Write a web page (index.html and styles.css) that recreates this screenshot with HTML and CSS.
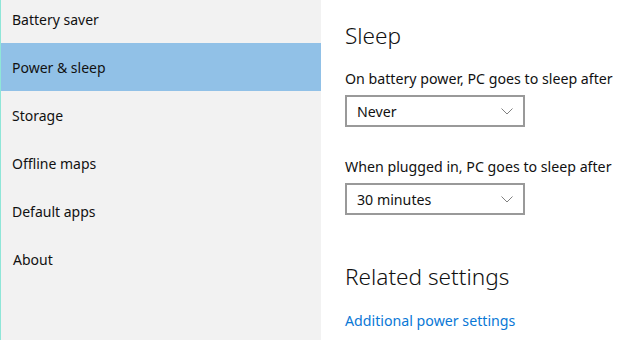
FILE: index.html
```html
<!DOCTYPE html>
<html>
<head>
<meta charset="utf-8">
<link rel="stylesheet" href="styles.css">
</head>
<body>
<div class="app">
  <nav class="sidebar">
    <ul class="nav-list">
      <li class="nav-item">Battery saver</li>
      <li class="nav-item selected">Power &amp; sleep</li>
      <li class="nav-item">Storage</li>
      <li class="nav-item">Offline maps</li>
      <li class="nav-item">Default apps</li>
      <li class="nav-item about">About</li>
    </ul>
  </nav>
  <main class="content">
    <h2 class="section-title">Sleep</h2>
    <div class="field">
      <div class="field-label">On battery power, PC goes to sleep after</div>
      <div class="select">
        <span class="select-value">Never</span>
        <svg class="chevron" width="12" height="7" viewBox="0 0 12 7"><polyline points="0.5,0.5 6,6 11.5,0.5" fill="none" stroke="#808080" stroke-width="1"/></svg>
      </div>
    </div>
    <div class="field">
      <div class="field-label">When plugged in, PC goes to sleep after</div>
      <div class="select">
        <span class="select-value">30 minutes</span>
        <svg class="chevron" width="12" height="7" viewBox="0 0 12 7"><polyline points="0.5,0.5 6,6 11.5,0.5" fill="none" stroke="#808080" stroke-width="1"/></svg>
      </div>
    </div>
    <h2 class="section-title related">Related settings</h2>
    <a class="link">Additional power settings</a>
  </main>
</div>
</body>
</html>
```
FILE: styles.css
```css
html, body {
  margin: 0;
  padding: 0;
  background: #ffffff;
  font-family: "Noto Sans", "Open Sans", sans-serif;
  color: #000;
}
.app {
  display: flex;
  width: 640px;
  height: 340px;
  overflow: hidden;
}
.sidebar {
  width: 320px;
  flex: none;
  background: #f2f2f2;
  border-left: 1px solid #8fe6d8;
}
.nav-list {
  list-style: none;
  margin: -5px 0 0 0;
  padding: 0;
}
.nav-item {
  height: 48px;
  display: flex;
  align-items: center;
  padding-left: 11px;
  font-size: 14px;
  color: #111;
}
.nav-item.about {
  padding-left: 12px;
}
.nav-item.selected {
  background: #91c1e7;
}
.content {
  padding-left: 24px;
  flex: 1;
}
.section-title {
  margin: 0;
  font-weight: 300;
  font-size: 22.6px;
  line-height: 32px;
  padding-top: 20px;
  color: #111;
}
.field {
  margin-top: 17px;
}
.field + .field {
  margin-top: 30px;
}
.field-label {
  font-size: 14.2px;
  line-height: 20px;
  color: #111;
}
.select {
  margin-top: 6px;
  height: 28px;
  border: 2px solid #999999;
  display: flex;
  align-items: center;
  justify-content: space-between;
  padding: 0 10px 0 10px;
  box-sizing: content-box;
  width: 156px;
}
.select-value {
  font-size: 14.2px;
  color: #111;
}
.chevron {
  display: block;
}
.section-title.related {
  padding-top: 46px;
}
.link {
  display: block;
  margin-top: 18px;
  color: #0a78d6;
  font-size: 14.2px;
  line-height: 20px;
}
```
